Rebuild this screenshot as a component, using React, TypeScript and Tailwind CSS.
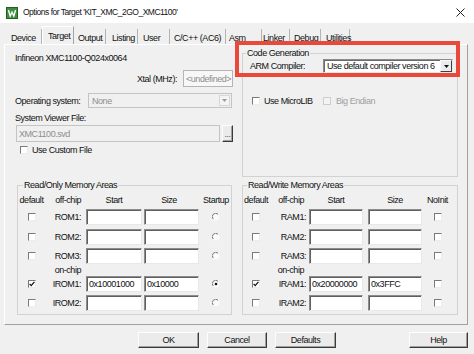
import React from "react";

const FONT = "font-['Liberation_Sans',Arial,sans-serif]";

const tabs = [
  { label: "Device", cls: "w-[38px] pl-[7px]" },
  { label: "Target", cls: "w-[32px] pl-[5px]", active: true },
  { label: "Output", cls: "w-[32px] pl-[4px]" },
  { label: "Listing", cls: "w-[32px] pl-[6px]" },
  { label: "User", cls: "w-[32px] pl-[5px]" },
  { label: "C/C++ (AC6)", cls: "w-[56px] pl-[4px]" },
  { label: "Asm", cls: "w-[36px] pl-[3px]" },
  { label: "Linker", cls: "w-[28px] pl-[1px]" },
  { label: "Debug", cls: "w-[31px] pl-[4px]" },
  { label: "Utilities", cls: "w-[29px] pl-[5px]" },
];

function Check({ checked = false, disabled = false }: { checked?: boolean; disabled?: boolean }) {
  return (
    <span
      className={`flex h-[8px] w-[8px] items-center justify-center border ${
        disabled
          ? "border-[#cdcdcd] bg-[#f3f3f3]"
          : "border-t-[#7a7a7a] border-l-[#7a7a7a] border-r-[#ececec] border-b-[#ececec] bg-white"
      }`}
    >
      {checked && (
        <svg width="6" height="6" viewBox="0 0 6 6">
          <path d="M0.6 2.9 L2.2 4.6 L5.4 0.9" fill="none" stroke="#111" strokeWidth="1.3" />
        </svg>
      )}
    </span>
  );
}

function Radio({ checked = false }: { checked?: boolean }) {
  return (
    <svg width="8" height="8" viewBox="0 0 8 8">
      <circle cx="4" cy="4" r="3.4" fill="#fbfbfb" />
      <path d="M1.3 6 A3.3 3.3 0 0 1 6 1.3" fill="none" stroke="#777" strokeWidth="1" />
      {checked && <circle cx="4" cy="4" r="1.3" fill="#111" />}
    </svg>
  );
}

function Arrow({ color }: { color: string }) {
  return (
    <svg width="5" height="3" viewBox="0 0 5 3">
      <path d="M0 0 H5 L2.5 3 Z" fill={color} />
    </svg>
  );
}

function Combo({ text, disabled = false }: { text: string; disabled?: boolean }) {
  if (disabled) {
    return (
      <div className="flex h-full border border-[#c4c4c4] bg-[#f0f0f0] text-[#8e8e8e]">
        <span className="flex-1 self-center truncate pl-[3px]">{text}</span>
        <span className="m-[1px] flex w-[11px] items-center justify-center border border-[#d6d6d6] bg-[#f4f4f4]">
          <Arrow color="#9a9a9a" />
        </span>
      </div>
    );
  }
  return (
    <div className="flex h-full border border-t-[#8c8c8c] border-l-[#8c8c8c] border-r-[#e8e8e8] border-b-[#e8e8e8] bg-white shadow-[inset_1px_1px_0_#6a6a6a]">
      <span className="flex-1 self-center truncate pl-[3px]">{text}</span>
      <span className="flex w-[12px] items-center justify-center border border-t-[#fafafa] border-l-[#fafafa] border-r-[#404040] border-b-[#404040] bg-[#ececec]">
        <Arrow color="#111" />
      </span>
    </div>
  );
}

function Field({ text = "", cls = "" }: { text?: string; cls?: string }) {
  return (
    <div
      className={`h-[16px] border border-t-[#8c8c8c] border-l-[#8c8c8c] border-r-[#e8e8e8] border-b-[#e8e8e8] bg-white pl-[2px] leading-[14px] whitespace-nowrap shadow-[inset_1px_1px_0_#5f5f5f] ${cls}`}
    >
      {text}
    </div>
  );
}

function Btn({ children, cls = "" }: { children: React.ReactNode; cls?: string }) {
  return (
    <div
      className={`flex h-[16px] items-center justify-center border border-t-[#fdfdfd] border-l-[#fdfdfd] border-r-[#3a3a3a] border-b-[#3a3a3a] bg-[#ebebeb] shadow-[inset_-1px_-1px_0_#a0a0a0] ${cls}`}
    >
      {children}
    </div>
  );
}

type Mem = { label: string; start?: string; size?: string; on?: boolean; mt: string };

const romRows: Mem[] = [
  { label: "ROM1:", mt: "mt-[3px]" },
  { label: "ROM2:", mt: "mt-[4px]" },
  { label: "ROM3:", mt: "mt-[3px]" },
  { label: "IROM1:", start: "0x10001000", size: "0x10000", on: true, mt: "mt-0" },
  { label: "IROM2:", mt: "mt-[3px]" },
];

const ramRows: Mem[] = [
  { label: "RAM1:", mt: "mt-[3px]" },
  { label: "RAM2:", mt: "mt-[4px]" },
  { label: "RAM3:", mt: "mt-[3px]" },
  { label: "IRAM1:", start: "0x20000000", size: "0x3FFC", on: true, mt: "mt-0" },
  { label: "IRAM2:", mt: "mt-[3px]" },
];

function ReadOnlyGroup() {
  const tpl = "grid grid-cols-[27px_41px_58px_57px_1fr] items-center";
  return (
    <fieldset className="ml-[2px] h-[135px] w-[215px] border border-[#d2d2d2]">
      <legend className="ml-[5px] px-[1px] leading-[11px]">Read/Only Memory Areas</legend>
      <div className={`${tpl} mt-[3px] h-[12px]`}>
        <span className="text-center">default</span>
        <span className="pr-[5px] text-right whitespace-nowrap">off-chip</span>
        <span className="w-[56px] text-center">Start</span>
        <span className="w-[50px] text-center">Size</span>
        <span className="text-center">Startup</span>
      </div>
      {romRows.map((r) => (
        <React.Fragment key={r.label}>
          {r.label === "IROM1:" && (
            <div className={`${tpl} h-[12px]`}>
              <span />
              <span className="pr-[5px] text-right whitespace-nowrap">on-chip</span>
            </div>
          )}
          <div className={`${tpl} h-[16px] ${r.mt}`}>
            <span className="flex justify-center">
              <Check checked={r.on} />
            </span>
            <span className="pr-[5px] text-right">{r.label}</span>
            <Field text={r.start} cls="w-[56px]" />
            <Field text={r.size} cls="w-[55px]" />
            <span className="flex justify-center">
              <Radio checked={r.on} />
            </span>
          </div>
        </React.Fragment>
      ))}
    </fieldset>
  );
}

function ReadWriteGroup() {
  const tpl = "grid grid-cols-[26px_40px_59px_57px_1fr] items-center";
  return (
    <fieldset className="h-[135px] w-[216px] border border-[#d2d2d2]">
      <legend className="ml-[4px] px-[1px] leading-[11px]">Read/Write Memory Areas</legend>
      <div className={`${tpl} mt-[3px] h-[12px]`}>
        <span className="text-center">default</span>
        <span className="pr-[5px] text-right whitespace-nowrap">off-chip</span>
        <span className="w-[54px] text-center">Start</span>
        <span className="w-[54px] text-center">Size</span>
        <span className="pl-[2px]">NoInit</span>
      </div>
      {ramRows.map((r) => (
        <React.Fragment key={r.label}>
          {r.label === "IRAM1:" && (
            <div className={`${tpl} h-[12px]`}>
              <span />
              <span className="pr-[5px] text-right whitespace-nowrap">on-chip</span>
            </div>
          )}
          <div className={`${tpl} h-[16px] ${r.mt}`}>
            <span className="flex justify-center">
              <Check checked={r.on} />
            </span>
            <span className="pr-[3px] text-right">{r.label}</span>
            <Field text={r.start} cls="w-[54px]" />
            <Field text={r.size} cls="w-[54px]" />
            <span className="flex pl-[9px]">
              <Check />
            </span>
          </div>
        </React.Fragment>
      ))}
    </fieldset>
  );
}

export default function App() {
  return (
    <div
      className={`h-[354px] w-[474px] overflow-hidden bg-[#f0f0f0] text-[9px] leading-[12px] tracking-[-0.45px] text-[#111] ${FONT}`}
    >
      {/* title bar */}
      <div className="flex h-[23px] items-center bg-white">
        <svg className="ml-[6px] mt-[2px]" width="12" height="12" viewBox="0 0 12 12">
          <rect x="0.5" y="0.5" width="11" height="11" fill="#3b8e3b" stroke="#235f23" />
          <path d="M2.4 3 L4.2 9 L6 5.2 L7.8 9 L9.6 3" fill="none" stroke="#fff" strokeWidth="1.4" />
        </svg>
        <span className="ml-[5px] mt-[1px] text-[8.5px] tracking-[-0.5px] whitespace-nowrap">
          Options for Target 'KIT_XMC_2GO_XMC1100'
        </span>
        <svg className="ml-auto mr-[9px] mt-[1px]" width="9" height="9" viewBox="0 0 9 9">
          <path d="M0.5 0.5 L8.5 8.5 M8.5 0.5 L0.5 8.5" stroke="#222" strokeWidth="1" />
        </svg>
      </div>

      {/* tab strip */}
      <div className="flex h-[21px] items-end pl-[4px]">
        {tabs.map((t) =>
          t.active ? (
            <div
              key={t.label}
              className={`h-[18px] border-t border-l border-r border-t-white border-l-white border-r-[#a3a3a3] pt-[3px] whitespace-nowrap ${t.cls}`}
            >
              {t.label}
            </div>
          ) : (
            <div
              key={t.label}
              className={`flex h-[15px] items-center border-r border-[#b4b4b4] pt-[2px] whitespace-nowrap ${t.cls}`}
            >
              {t.label}
            </div>
          )
        )}
      </div>

      {/* tab page */}
      <div className="ml-[4px] h-[281px] w-[464px] border border-t-white border-l-white border-r-[#a0a0a0] border-b-[#a0a0a0]">
        <div className="grid grid-cols-[218px_216px] gap-x-[9px] pl-[10px]">
          <div className="flex flex-col">
            <div className="mt-[7px] h-[12px]">Infineon XMC1100-Q024x0064</div>
            <div className="mt-[6px] flex h-[17px] items-center justify-end">
              <span className="mr-[6px]">Xtal (MHz):</span>
              <div className="flex h-full w-[50px] items-center border border-[#b5b5b5] bg-[#f7f7f7] pl-[2px] text-[#8e8e8e]">
                &lt;undefined&gt;
              </div>
            </div>
            <div className="mt-[6px] flex h-[15px] items-center">
              <span className="w-[73px] whitespace-nowrap">Operating system:</span>
              <div className="h-full w-[144px]">
                <Combo text="None" disabled />
              </div>
            </div>
            <div className="mt-[4px] h-[12px]">System Viewer File:</div>
            <div className="mt-[1px] flex h-[17px] gap-[2px]">
              <div className="ml-[1px] flex w-[204px] items-center border border-[#c4c4c4] bg-[#f0f0f0] pl-[2px] text-[#8e8e8e]">
                XMC1100.svd
              </div>
              <Btn cls="h-[17px] w-[11px] items-end pb-[1px] text-[#555]">...</Btn>
            </div>
            <div className="mt-[2px] flex h-[12px] items-center">
              <span className="ml-[5px]">
                <Check />
              </span>
              <span className="ml-[4px]">Use Custom File</span>
            </div>
          </div>

          <div className="relative">
            <fieldset className="mt-[3px] h-[129px] border border-[#d2d2d2]">
              <legend className="ml-[3px] px-[1px] leading-[11px]">Code Generation</legend>
              <div className="flex h-[14px] items-center pl-[7px] pr-[4px]">
                <span className="w-[73px] whitespace-nowrap">ARM Compiler:</span>
                <div className="h-full flex-1">
                  <Combo text="Use default compiler version 6" />
                </div>
              </div>
              <div className="mt-[22px] flex h-[12px] items-center pl-[9px]">
                <Check />
                <span className="ml-[4px] w-[59px] whitespace-nowrap">Use MicroLIB</span>
                <Check disabled />
                <span className="ml-[5px] text-[#a0a0a0]">Big Endian</span>
              </div>
            </fieldset>
            {/* highlight annotation */}
            <div className="pointer-events-none absolute left-[-7px] top-[-4px] h-[36px] w-[225px] border-[4px] border-[#e9493b]" />
          </div>
        </div>

        <div className="mt-[3px] grid grid-cols-[218px_216px] gap-x-[9px] pl-[10px]">
          <ReadOnlyGroup />
          <ReadWriteGroup />
        </div>
      </div>

      {/* buttons */}
      <div className="mt-[7px] flex w-[468px] pl-[138px]">
        <Btn cls="w-[61px]">OK</Btn>
        <Btn cls="ml-[8px] w-[60px]">Cancel</Btn>
        <Btn cls="ml-[8px] w-[61px]">Defaults</Btn>
        <Btn cls="ml-auto w-[59px]">Help</Btn>
      </div>
    </div>
  );
}
